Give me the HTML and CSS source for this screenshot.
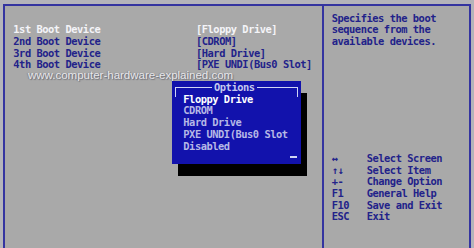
FILE: index.html
```html
<!DOCTYPE html>
<html>
<head>
<meta charset="utf-8">
<link rel="stylesheet" href="styles.css">
</head>
<body>
<div class="screen">
  <div class="frame">
    <section class="main">
      <div class="row sel"><span class="label">1st Boot Device</span><span class="val">[Floppy Drive]</span></div>
      <div class="row"><span class="label">2nd Boot Device</span><span class="val">[CDROM]</span></div>
      <div class="row"><span class="label">3rd Boot Device</span><span class="val">[Hard Drive]</span></div>
      <div class="row"><span class="label">4th Boot Device</span><span class="val">[PXE UNDI(Bus0 Slot]</span></div>
    </section>
    <aside class="help">
      <p class="desc">Specifies the boot<br>sequence from the<br>available devices.</p>
      <ul class="keys">
        <li><span class="k">↔</span><span>Select Screen</span></li>
        <li><span class="k">↑↓</span><span>Select Item</span></li>
        <li><span class="k">+-</span><span>Change Option</span></li>
        <li><span class="k">F1</span><span>General Help</span></li>
        <li><span class="k">F10</span><span>Save and Exit</span></li>
        <li><span class="k">ESC</span><span>Exit</span></li>
      </ul>
    </aside>
  </div>
  <div class="watermark">www.computer-hardware-explained.com</div>
  <div class="popup">
    <div class="title-row"><span class="rule rule-l"></span><span class="title">Options</span><span class="rule rule-r"></span></div>
    <ul class="opts">
      <li class="on">Floppy Drive</li>
      <li>CDROM</li>
      <li>Hard Drive</li>
      <li>PXE UNDI(Bus0 Slot</li>
      <li>Disabled</li>
    </ul>
    <div class="foot"><span class="dash"></span></div>
  </div>
</div>
</body>
</html>
```
FILE: styles.css
```css
html, body {
  margin: 0;
  padding: 0;
  background: #b4b4ba;
  overflow: hidden;
}
.screen {
  position: relative;
  width: 474px;
  height: 248px;
  overflow: hidden;
  font-family: "DejaVu Sans Mono", "Liberation Mono", monospace;
  font-weight: bold;
  font-size: 10.4px;
  letter-spacing: -0.46px;
  line-height: 11.7px;
  color: #22228a;
}
.frame {
  margin: 4px 0 0 3px;
  width: 464px;
  height: 242px;
  border: 2px solid #3434a0;
  border-bottom: none;
  background: #a9a9a9;
  display: grid;
  grid-template-columns: 317px 1fr;
}
.main {
  padding: 18.2px 0 0 8.3px;
}
.row {
  display: grid;
  grid-template-columns: 182.7px auto;
  white-space: pre;
}
.row.sel { color: #f4f4f8; }
.help {
  border-left: 2px solid #3434a0;
  padding: 6.5px 0 0 7.7px;
}
.desc { margin: 0; }
.keys {
  list-style: none;
  margin: 105.3px 0 0 0;
  padding: 0;
}
.keys li {
  display: grid;
  grid-template-columns: 35px auto;
  white-space: pre;
}
.watermark {
  position: absolute;
  left: 28px;
  top: 68px;
  font-family: "Liberation Sans", Arial, sans-serif;
  font-weight: normal;
  font-size: 11.5px;
  letter-spacing: 0;
  line-height: 14px;
  color: rgba(246, 246, 250, 0.88);
  text-shadow: 1px 1px 1px rgba(80, 80, 90, 0.6), -1px 0 1px rgba(80, 80, 90, 0.4);
}
.popup {
  position: absolute;
  left: 172px;
  top: 81px;
  width: 129px;
  height: 83px;
  padding-top: 1px;
  box-sizing: border-box;
  background: #1212ac;
  box-shadow: 6px 12px 0 #000;
  color: #b6b8e6;
  display: flex;
  flex-direction: column;
}
.title-row {
  height: 11.7px;
  display: flex;
  align-items: flex-start;
  padding: 0 3px;
}
.rule {
  margin-top: 5px;
  height: 9px;
  border-top: 1px solid #d0d4f4;
}
.rule-l {
  width: 36px;
  border-left: 1px solid #d0d4f4;
  margin-right: 2px;
}
.rule-r {
  flex: 1;
  margin-left: 2px;
  border-right: 1px solid #d0d4f4;
}
.title { color: #c4c8ee; }
.opts {
  list-style: none;
  margin: 0;
  padding: 0 0 0 11.3px;
}
.opts li { white-space: pre; }
.opts li.on { color: #ffffff; }
.foot {
  display: flex;
  justify-content: flex-end;
  padding: 4px 4px 0 0;
}
.dash {
  width: 7px;
  height: 1.5px;
  background: #d0d4f4;
}
```
